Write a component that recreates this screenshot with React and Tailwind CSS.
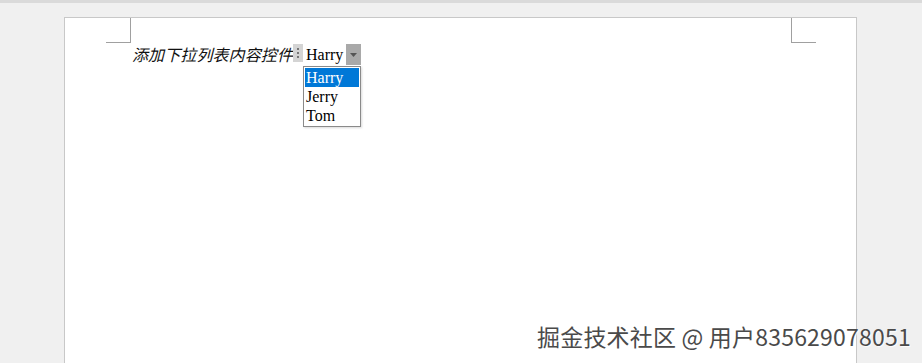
import React from 'react'

const options = ["Harry", "Jerry", "Tom"];

const App = () => {
  return (
    <div className="relative w-[922px] h-[363px] overflow-hidden bg-[#f0f0f0]">
      {/* top toolbar edge */}
      <div className="h-[3px] bg-[#dadada]" />
      <div className="pl-[64px] pt-[14px] h-full">
        {/* page */}
        <div className="relative w-[793px] h-full bg-white border border-[#c8c8c8] border-b-0">
          {/* corner marks */}
          <div className="absolute left-[41px] top-0 w-[25px] h-[25px] border-r border-b border-[#a0a0a0]" />
          <div className="absolute left-[726px] top-0 w-[25px] h-[25px] border-l border-b border-[#a0a0a0]" />

          <div className="pl-[67px] pt-[26px] flex items-start">
            <span
              className="italic text-[16px] tracking-[0.1px] leading-[20px] text-[#111]"
              style={{ fontFamily: '"Noto Sans CJK SC", sans-serif' }}
            >
              添加下拉列表内容控件
            </span>
            {/* control handle */}
            <div className="w-[10px] h-[18px] bg-[#d4d4d4] flex flex-col items-center justify-center gap-[2px]">
              <span className="w-[2px] h-[2px] bg-[#777]" />
              <span className="w-[2px] h-[2px] bg-[#777]" />
              <span className="w-[2px] h-[2px] bg-[#777]" />
            </div>
            <div className="flex flex-col" style={{ fontFamily: '"Liberation Serif", serif' }}>
              <div className="flex h-[21px]">
                <div className="w-[43px] text-[16px] leading-[21px] text-black pl-[3px] bg-white">Harry</div>
                <div className="w-[15px] bg-[#a9a9a9] flex items-center justify-center">
                  <svg width="7" height="4" viewBox="0 0 7 4">
                    <path d="M0 0 L7 0 L3.5 4 Z" fill="#555" />
                  </svg>
                </div>
              </div>
              <div className="mt-[1px] w-[58px] border border-[#8a8a8a] bg-white shadow-[1px_1px_2px_rgba(0,0,0,0.15)] py-[1px] px-[1px]">
                {options.map((o, i) => (
                  <div
                    key={o}
                    className={
                      "h-[19px] text-[16px] leading-[19px] pl-[1px] " +
                      (i === 0 ? "bg-[#0078d7] text-white" : "text-black")
                    }
                  >
                    {o}
                  </div>
                ))}
              </div>
            </div>
          </div>
        </div>
      </div>

      {/* watermark */}
      <div
        className="absolute left-[537px] top-[321px] text-[23px] tracking-[0.2px] leading-[30px] text-[#4a4a4a] whitespace-nowrap [text-shadow:1px_1px_1px_rgba(255,255,255,0.9)]"
        style={{ fontFamily: '"Noto Sans CJK SC", sans-serif' }}
      >
        掘金技术社区 @ 用户835629078051
      </div>
    </div>
  )
}

export default App
